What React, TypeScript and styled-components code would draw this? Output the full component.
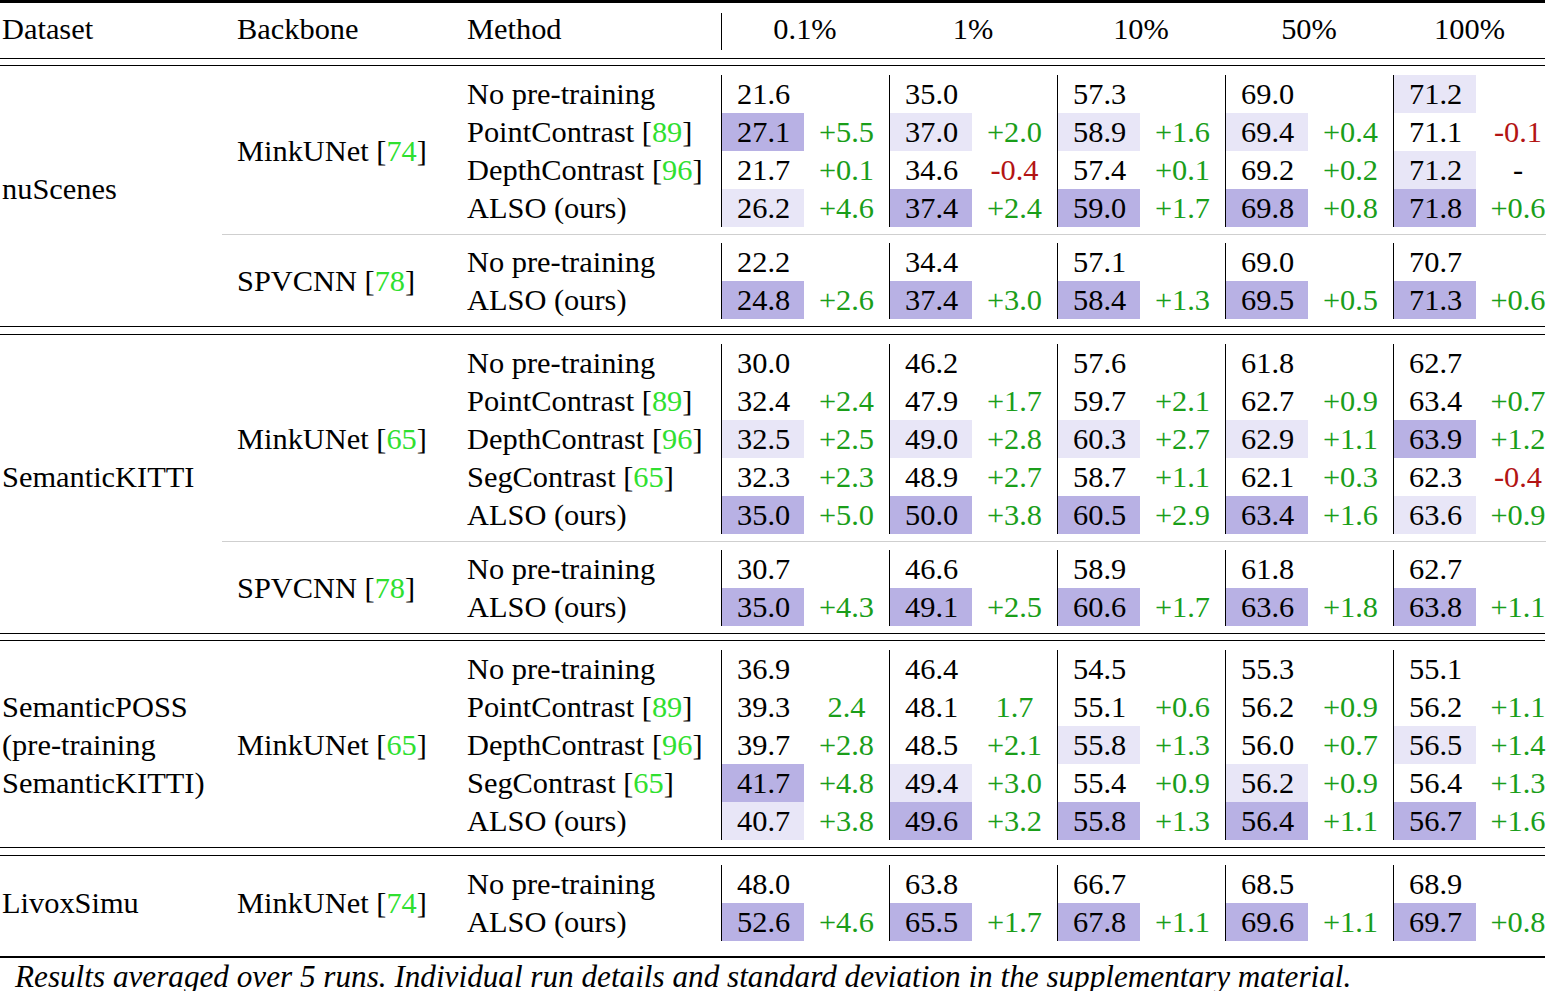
import React from 'react';
import styled, { createGlobalStyle } from 'styled-components';

const GlobalStyle = createGlobalStyle`
  html, body {
    margin: 0;
    padding: 0;
    background: #fff;
  }
  body {
    font-family: "Liberation Serif", "Times New Roman", serif;
    color: #000;
    overflow: hidden;
  }
`;

type Shade = 'dark' | 'light' | '';
type Val = { v: string; d: string; s: Shade };
type Row = { method: string; cite?: string; vals: Val[] };
type Group = { backbone: string; cite: string; rows: Row[] };
type Section = { dataset: string[]; groups: Group[] };

// "27.1*" -> dark, "71.2~" -> light
const parse = (spec: string): Val[] =>
  spec.split(' ').map((tok) => {
    const [raw, d = ''] = tok.split('|');
    const s: Shade = raw.endsWith('*') ? 'dark' : raw.endsWith('~') ? 'light' : '';
    return { v: raw.replace(/[*~]/, ''), d, s };
  });

const DATA: Section[] = [
  {
    dataset: ['nuScenes'],
    groups: [
      {
        backbone: 'MinkUNet',
        cite: '74',
        rows: [
          { method: 'No pre-training', vals: parse('21.6 35.0 57.3 69.0 71.2~') },
          { method: 'PointContrast', cite: '89', vals: parse('27.1*|+5.5 37.0~|+2.0 58.9~|+1.6 69.4~|+0.4 71.1|-0.1') },
          { method: 'DepthContrast', cite: '96', vals: parse('21.7|+0.1 34.6|-0.4 57.4|+0.1 69.2|+0.2 71.2~|-') },
          { method: 'ALSO (ours)', vals: parse('26.2~|+4.6 37.4*|+2.4 59.0*|+1.7 69.8*|+0.8 71.8*|+0.6') },
        ],
      },
      {
        backbone: 'SPVCNN',
        cite: '78',
        rows: [
          { method: 'No pre-training', vals: parse('22.2 34.4 57.1 69.0 70.7') },
          { method: 'ALSO (ours)', vals: parse('24.8*|+2.6 37.4*|+3.0 58.4*|+1.3 69.5*|+0.5 71.3*|+0.6') },
        ],
      },
    ],
  },
  {
    dataset: ['SemanticKITTI'],
    groups: [
      {
        backbone: 'MinkUNet',
        cite: '65',
        rows: [
          { method: 'No pre-training', vals: parse('30.0 46.2 57.6 61.8 62.7') },
          { method: 'PointContrast', cite: '89', vals: parse('32.4|+2.4 47.9|+1.7 59.7|+2.1 62.7|+0.9 63.4|+0.7') },
          { method: 'DepthContrast', cite: '96', vals: parse('32.5~|+2.5 49.0~|+2.8 60.3~|+2.7 62.9~|+1.1 63.9*|+1.2') },
          { method: 'SegContrast', cite: '65', vals: parse('32.3|+2.3 48.9|+2.7 58.7|+1.1 62.1|+0.3 62.3|-0.4') },
          { method: 'ALSO (ours)', vals: parse('35.0*|+5.0 50.0*|+3.8 60.5*|+2.9 63.4*|+1.6 63.6~|+0.9') },
        ],
      },
      {
        backbone: 'SPVCNN',
        cite: '78',
        rows: [
          { method: 'No pre-training', vals: parse('30.7 46.6 58.9 61.8 62.7') },
          { method: 'ALSO (ours)', vals: parse('35.0*|+4.3 49.1*|+2.5 60.6*|+1.7 63.6*|+1.8 63.8*|+1.1') },
        ],
      },
    ],
  },
  {
    dataset: ['SemanticPOSS', '(pre-training', 'SemanticKITTI)'],
    groups: [
      {
        backbone: 'MinkUNet',
        cite: '65',
        rows: [
          { method: 'No pre-training', vals: parse('36.9 46.4 54.5 55.3 55.1') },
          { method: 'PointContrast', cite: '89', vals: parse('39.3|2.4 48.1|1.7 55.1|+0.6 56.2|+0.9 56.2|+1.1') },
          { method: 'DepthContrast', cite: '96', vals: parse('39.7|+2.8 48.5|+2.1 55.8~|+1.3 56.0|+0.7 56.5~|+1.4') },
          { method: 'SegContrast', cite: '65', vals: parse('41.7*|+4.8 49.4~|+3.0 55.4|+0.9 56.2~|+0.9 56.4|+1.3') },
          { method: 'ALSO (ours)', vals: parse('40.7~|+3.8 49.6*|+3.2 55.8*|+1.3 56.4*|+1.1 56.7*|+1.6') },
        ],
      },
    ],
  },
  {
    dataset: ['LivoxSimu'],
    groups: [
      {
        backbone: 'MinkUNet',
        cite: '74',
        rows: [
          { method: 'No pre-training', vals: parse('48.0 63.8 66.7 68.5 68.9') },
          { method: 'ALSO (ours)', vals: parse('52.6*|+4.6 65.5*|+1.7 67.8*|+1.1 69.6*|+1.1 69.7*|+0.8') },
        ],
      },
    ],
  },
];

const PCTS = ['0.1%', '1%', '10%', '50%', '100%'];
const ROW_H = 38;

const Cite = ({ n }: { n: string }) => (
  <>
    {' '}[<CiteNum>{n}</CiteNum>]
  </>
);

export default function App() {
  return (
    <Page>
      <GlobalStyle />
      <ThickRule />
      <HeaderRow>
        <HeadCell $pad={2}>Dataset</HeadCell>
        <HeadCell $pad={15}>Backbone</HeadCell>
        <HeadCell $pad={15}>Method</HeadCell>
        {PCTS.map((p, i) => (
          <PctCell key={p} $rule={i === 0}>
            {p}
          </PctCell>
        ))}
      </HeaderRow>
      {DATA.map((sec, si) => {
        const total = sec.groups.reduce((n, g) => n + g.rows.length, 0);
        return (
          <React.Fragment key={si}>
            <DoubleRule />
            <SectionRow>
              <DatasetLabel style={{ height: total * ROW_H }}>
                {sec.dataset.map((l) => (
                  <span key={l}>{l}</span>
                ))}
              </DatasetLabel>
              <Blocks>
                {sec.groups.map((g, gi) => (
                  <React.Fragment key={gi}>
                    {gi > 0 && <MidRule />}
                    <Block $afterRule={gi > 0}>
                      <BackboneCell style={{ gridRow: `1 / span ${g.rows.length}` }}>
                        {g.backbone}
                        <Cite n={g.cite} />
                      </BackboneCell>
                      {g.rows.map((r, ri) => (
                        <React.Fragment key={ri}>
                          <MethodCell>
                            {r.method}
                            {r.cite && <Cite n={r.cite} />}
                          </MethodCell>
                          {r.vals.map((c, ci) => (
                            <React.Fragment key={ci}>
                              <ValueCell $shade={c.s}>{c.v}</ValueCell>
                              <DeltaCell
                                $last={ci === 4}
                                $tone={c.d === '-' ? 'plain' : c.d.startsWith('-') ? 'neg' : 'pos'}
                              >
                                {c.d}
                              </DeltaCell>
                            </React.Fragment>
                          ))}
                        </React.Fragment>
                      ))}
                    </Block>
                  </React.Fragment>
                ))}
              </Blocks>
            </SectionRow>
          </React.Fragment>
        );
      })}
      <ThickRule $bottom />
      <Caption>
        Results averaged over 5 runs. Individual run details and standard deviation in the supplementary material.
      </Caption>
    </Page>
  );
}

const Page = styled.div`
  width: 1545px;
  font-size: 30.4px;
  line-height: ${ROW_H}px;
  white-space: nowrap;
`;

const ThickRule = styled.div<{ $bottom?: boolean }>`
  height: 2.5px;
  background: #000;
  margin-top: ${(p) => (p.$bottom ? '8px' : '0')};
`;

const DoubleRule = styled.div`
  height: 6.5px;
  border-top: 1.5px solid #000;
  border-bottom: 1.5px solid #000;
`;

const MidRule = styled.div`
  height: 1px;
  background: #cfcfcf;
`;

const HeaderRow = styled.div`
  display: grid;
  grid-template-columns: 222px 230px 269px repeat(4, 168px) 153px;
  grid-auto-rows: ${ROW_H}px;
  padding: 7px 0 10px;
`;

const HeadCell = styled.div<{ $pad: number }>`
  padding-left: ${(p) => p.$pad}px;
`;

const PctCell = styled.div<{ $rule: boolean }>`
  position: relative;
  text-align: center;

  &::before {
    content: '';
    display: ${(p) => (p.$rule ? 'block' : 'none')};
    position: absolute;
    left: 0;
    top: 3px;
    height: 37px;
    width: 1px;
    background: #000;
  }
`;

const SectionRow = styled.div`
  display: grid;
  grid-template-columns: 222px 1fr;
  padding-top: 9px;
`;

const DatasetLabel = styled.div`
  align-self: start;
  display: flex;
  flex-direction: column;
  justify-content: center;
  padding-left: 2px;
`;

const Blocks = styled.div`
  display: flex;
  flex-direction: column;
`;

const Block = styled.div<{ $afterRule: boolean }>`
  display: grid;
  grid-template-columns: 230px 269px repeat(4, 83px 85px) 83px 70px;
  grid-auto-rows: ${ROW_H}px;
  padding-top: ${(p) => (p.$afterRule ? '8px' : '0')};
  padding-bottom: 7px;
`;

const BackboneCell = styled.div`
  grid-column: 1;
  align-self: center;
  padding-left: 15px;
`;

const MethodCell = styled.div`
  padding-left: 15px;
`;

const ValueCell = styled.div<{ $shade: Shade }>`
  border-left: 1px solid #000;
  padding-left: 15px;
  background: ${(p) => (p.$shade === 'dark' ? '#b8b1e4' : p.$shade === 'light' ? '#e8e6f7' : 'transparent')};
`;

const DeltaCell = styled.div<{ $last: boolean; $tone: 'pos' | 'neg' | 'plain' }>`
  text-align: center;
  padding: ${(p) => (p.$last ? '0 0 0 14px' : '0 14px')};
  color: ${(p) => (p.$tone === 'neg' ? '#b31414' : p.$tone === 'pos' ? '#1a9e1a' : '#000')};
`;

const CiteNum = styled.span`
  color: #2fe02f;
`;

const Caption = styled.div`
  padding-left: 15px;
  font-style: italic;
  font-size: 31.2px;
`;
